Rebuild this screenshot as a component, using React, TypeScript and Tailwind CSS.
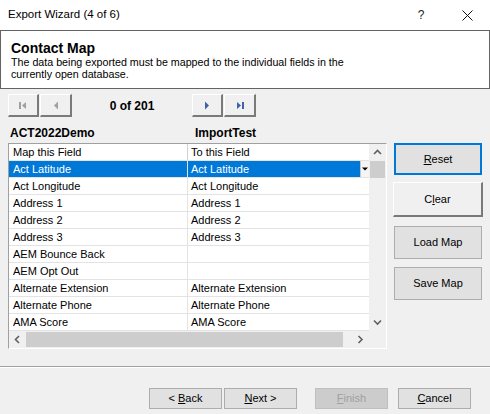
import React from 'react'

// Export wizard, contact map step
const rows: [string, string][] = [
  ['Act Latitude', 'Act Latitude'],
  ['Act Longitude', 'Act Longitude'],
  ['Address 1', 'Address 1'],
  ['Address 2', 'Address 2'],
  ['Address 3', 'Address 3'],
  ['AEM Bounce Back', ''],
  ['AEM Opt Out', ''],
  ['Alternate Extension', 'Alternate Extension'],
  ['Alternate Phone', 'Alternate Phone'],
  ['AMA Score', 'AMA Score'],
]

function Chevron({ dir }: { dir: 'up' | 'down' | 'left' | 'right' }) {
  const d = {
    up: 'M1 5 L4.5 1.5 L8 5',
    down: 'M1 1.5 L4.5 5 L8 1.5',
    left: 'M5 1 L1.5 4.5 L5 8',
    right: 'M1.5 1 L5 4.5 L1.5 8',
  }[dir]
  const vertical = dir === 'up' || dir === 'down'
  return (
    <svg width={vertical ? 9 : 7} height={vertical ? 7 : 9} viewBox={vertical ? '0 0 9 7' : '0 0 7 9'}>
      <path d={d} fill="none" stroke="#606060" strokeWidth="1.6" />
    </svg>
  )
}

function NavIcon({ kind, enabled }: { kind: 'first' | 'prev' | 'next' | 'last'; enabled: boolean }) {
  const c = enabled ? '#4062a8' : '#a0a0a0'
  return (
    <svg width="10" height="9" viewBox="0 0 10 9">
      {kind === 'first' && (
        <>
          <rect x="1" y="1" width="2" height="7" fill={c} />
          <path d="M8 1 L4 4.5 L8 8 Z" fill={c} />
        </>
      )}
      {kind === 'prev' && <path d="M7 0.5 L3 4.5 L7 8.5 Z" fill={c} />}
      {kind === 'next' && <path d="M3 0.5 L7 4.5 L3 8.5 Z" fill={c} />}
      {kind === 'last' && (
        <>
          <path d="M2 1 L6 4.5 L2 8 Z" fill={c} />
          <rect x="7" y="1" width="2" height="7" fill={c} />
        </>
      )}
    </svg>
  )
}

function NavButton({ kind, enabled, w }: { kind: 'first' | 'prev' | 'next' | 'last'; enabled: boolean; w: string }) {
  return (
    <div className={`${w} h-[23px] flex items-center justify-center bg-[#f0f0f0] border-t border-l border-t-white border-l-white border-b-2 border-r-2 border-b-[#7a7a7a] border-r-[#7a7a7a]`}>
      <NavIcon kind={kind} enabled={enabled} />
    </div>
  )
}

export default function App() {
  return (
    <div className="w-[490px] h-[414px] bg-[#f0f0f0] flex flex-col overflow-hidden text-black font-['Liberation_Sans',Arial,sans-serif] text-[11px]">
      {/* title bar */}
      <div className="h-[30px] bg-white flex items-center pl-[8px] text-[11.5px] shrink-0">
        <span>Export Wizard (4 of 6)</span>
        <div className="ml-auto flex h-full">
          <div className="w-[46px] flex items-center justify-center text-[12px] text-[#222]">?</div>
          <div className="w-[46px] flex items-center justify-center">
            <svg width="11" height="11" viewBox="0 0 11 11">
              <path d="M0.5 0.5 L10.5 10.5 M10.5 0.5 L0.5 10.5" stroke="#111" strokeWidth="1" />
            </svg>
          </div>
        </div>
      </div>

      {/* header */}
      <div className="h-[59px] shrink-0 border border-[#646464] bg-white pl-[10px] pt-[9px]">
        <div className="text-[14px] font-bold leading-[16px]">Contact Map</div>
        <div className="text-[10.7px] leading-[12px]">
          The data being exported must be mapped to the individual fields in the
          <br />
          currently open database.
        </div>
      </div>

      {/* record navigation */}
      <div className="mt-[5px] h-[23px] flex items-center pl-[8px] shrink-0">
        <div className="flex gap-[1px]">
          <NavButton kind="first" enabled={false} w="w-[31px]" />
          <NavButton kind="prev" enabled={false} w="w-[32px]" />
        </div>
        <div className="w-[120px] text-center text-[12px] font-bold">0 of 201</div>
        <div className="flex gap-[1px]">
          <NavButton kind="next" enabled w="w-[31px]" />
          <NavButton kind="last" enabled w="w-[32px]" />
        </div>
      </div>

      <div className="mt-[9px] h-[14px] flex text-[12px] font-bold leading-[14px] pl-[10px] shrink-0">
        <span className="w-[185px]">ACT2022Demo</span>
        <span>ImportTest</span>
      </div>

      <div className="mt-[3px] flex pl-[8px] shrink-0">
        {/* grid */}
        <div className="w-[379px] h-[206px] flex flex-col border border-t-[#a0a0a0] border-l-[#a0a0a0] border-r-white border-b-white">
          <div className="h-[187px] flex">
            <div className="w-[360px] bg-white flex flex-col">
              <div className="h-[17px] flex border-b border-[#e3e3e3]">
                <div className="w-[179px] pl-[4px] leading-[16px] border-r border-[#d0d0d0]">Map this Field</div>
                <div className="flex-1 pl-[3px] leading-[16px]">To this Field</div>
              </div>
              {rows.map(([from, to], i) => {
                const sel = i === 0
                return (
                  <div key={from} className="h-[17px] flex border-b border-[#e3e3e3]">
                    <div className={`w-[179px] pl-[4px] leading-[16px] border-r border-[#e3e3e3] ${sel ? 'bg-[#0078d7] text-white' : ''}`}>
                      {from}
                    </div>
                    <div className={`flex-1 flex leading-[16px] ${sel ? 'bg-[#0078d7] text-white' : ''}`}>
                      <span className="flex-1 pl-[3px]">{to}</span>
                      {sel && (
                        <div className="w-[9px] bg-[#f4f4f4] border-l border-[#c8c8c8] flex items-center justify-center">
                          <svg width="6" height="4" viewBox="0 0 6 4">
                            <path d="M0 0.5 L6 0.5 L3 3.5 Z" fill="#000" />
                          </svg>
                        </div>
                      )}
                    </div>
                  </div>
                )
              })}
            </div>
            {/* vertical scrollbar */}
            <div className="w-[17px] bg-[#f0f0f0] flex flex-col">
              <div className="h-[17px] flex items-center justify-center">
                <Chevron dir="up" />
              </div>
              <div className="h-[17px] mx-[1px] bg-[#cdcdcd]" />
              <div className="flex-1" />
              <div className="h-[17px] flex items-center justify-center">
                <Chevron dir="down" />
              </div>
            </div>
          </div>
          {/* horizontal scrollbar */}
          <div className="h-[17px] flex bg-[#f0f0f0]">
            <div className="w-[360px] flex">
              <div className="w-[17px] flex items-center justify-center">
                <Chevron dir="left" />
              </div>
              <div className="w-[317px] my-[1px] bg-[#cdcdcd]" />
              <div className="flex-1" />
              <div className="w-[17px] flex items-center justify-center">
                <Chevron dir="right" />
              </div>
            </div>
            <div className="w-[17px]" />
          </div>
        </div>

        {/* side buttons */}
        <div className="flex flex-col ml-[7px] text-[11px]">
          <div className="w-[88px] h-[32px] flex items-center justify-center bg-[#e1e1e1] border-2 border-[#0078d7]">
            <span><span className="underline">R</span>eset</span>
          </div>
          <div className="mt-[7px] -ml-[1px] w-[90px] h-[35px] flex items-center justify-center bg-[#f0f0f0] border-t border-l border-t-white border-l-white border-b-2 border-r-2 border-b-[#7a7a7a] border-r-[#7a7a7a]">
            <span>C<span className="underline">l</span>ear</span>
          </div>
          <div className="mt-[9px] w-[88px] h-[33px] flex items-center justify-center bg-[#e1e1e1] border border-[#adadad]">
            Load Map
          </div>
          <div className="mt-[8px] w-[88px] h-[33px] flex items-center justify-center bg-[#e1e1e1] border border-[#adadad]">
            Save Map
          </div>
        </div>
      </div>

      {/* footer */}
      <div className="mt-[17px] h-[2px] border-t border-[#a0a0a0] border-b border-b-white shrink-0" />
      <div className="mt-[20px] flex pl-[149px] text-[11px] shrink-0">
        <div className="w-[73px] h-[21px] flex items-center justify-center bg-[#e1e1e1] border border-[#adadad]">
          <span>&lt; <span className="underline">B</span>ack</span>
        </div>
        <div className="ml-[2px] w-[73px] h-[21px] flex items-center justify-center bg-[#e1e1e1] border border-[#adadad]">
          <span><span className="underline">N</span>ext &gt;</span>
        </div>
        <div className="ml-[18px] w-[73px] h-[21px] flex items-center justify-center bg-[#cccccc] border border-[#bfbfbf] text-[#a0a0a0]">
          <span><span className="underline">F</span>inish</span>
        </div>
        <div className="ml-[10px] w-[73px] h-[21px] flex items-center justify-center bg-[#e1e1e1] border border-[#adadad]">
          <span><span className="underline">C</span>ancel</span>
        </div>
      </div>
    </div>
  )
}
